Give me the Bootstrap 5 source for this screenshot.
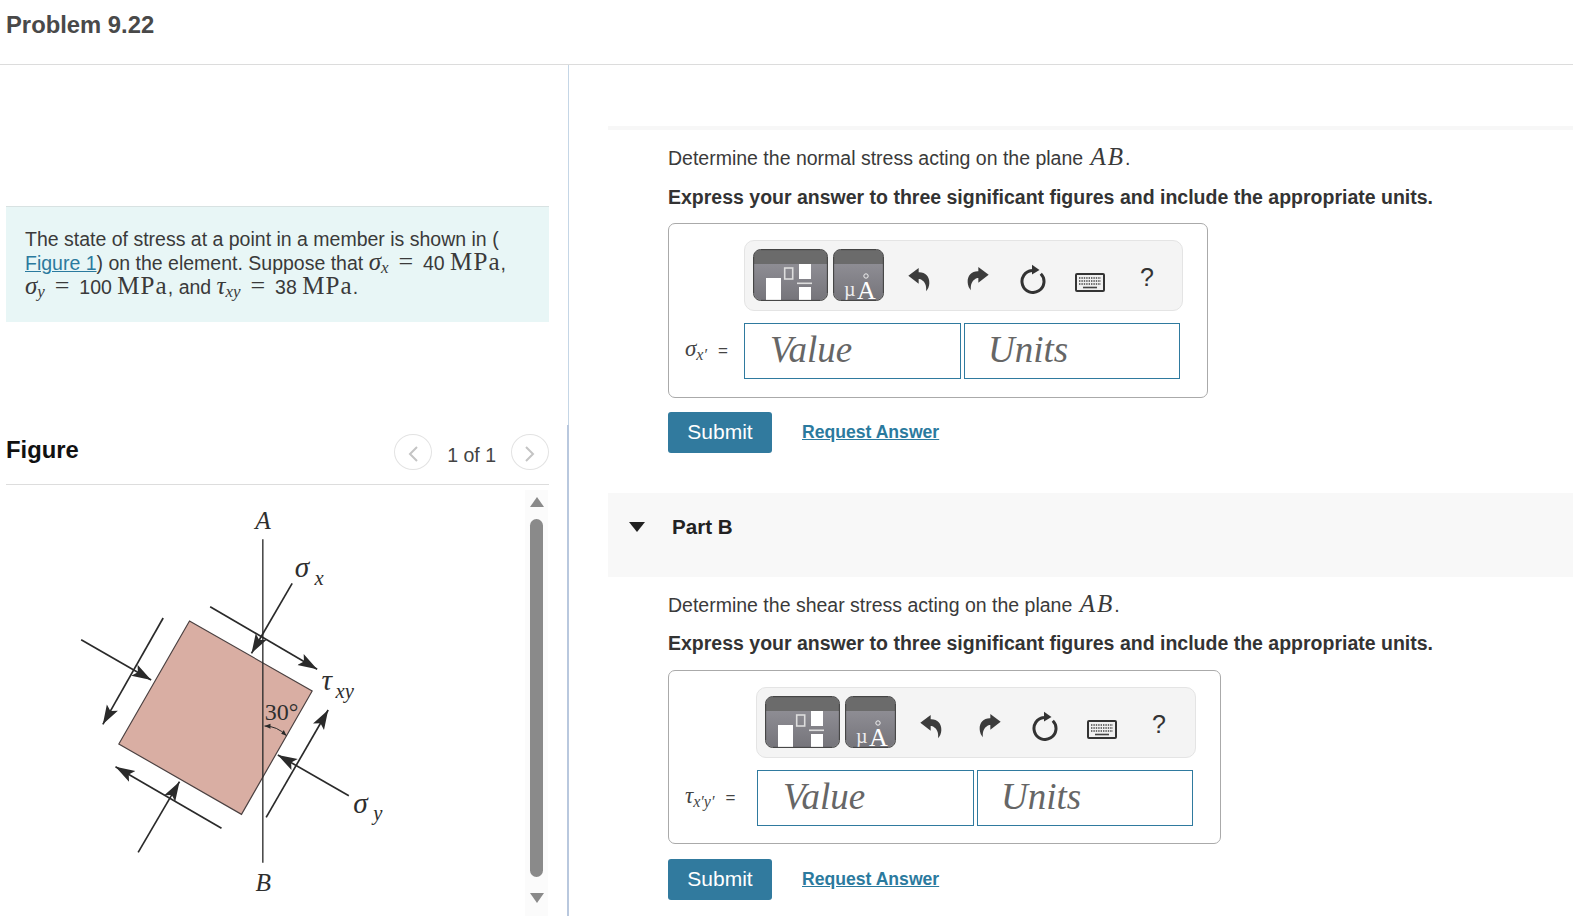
<!DOCTYPE html>
<html lang="en"><head><meta charset="utf-8"><title>Problem 9.22</title>
<link rel="stylesheet" href="https://cdn.jsdelivr.net/npm/bootstrap@5.3.0/dist/css/bootstrap.min.css">
<style>
html,body{height:916px;overflow:hidden;background:#fff}
body{font-family:"Liberation Sans",Arial,sans-serif;font-size:19.5px;line-height:24px;color:#3a3a3a}
.pg-head{height:65px;border-bottom:1px solid #dcdcdc;padding:13px 6px 0}
.pg-title{font-size:23.8px;font-weight:700;line-height:24px;color:#494949;margin:0}
.pg-main{height:851px}
.left-pane{width:569px;flex:none;border-right:1px solid #c5d6e6;padding:141px 19px 0 6px;position:relative}
.left-pane::after{content:"";position:absolute;right:-1px;top:360px;bottom:0;width:2px;background:#b9c8de}
.intro-box{height:116px;background:#e8f6f6;border-top:1px solid #d8e2e2;padding:20px 19px 0;margin-bottom:103px}
.fig-link{color:#2b7a9e;text-decoration:underline}
.fm{font-family:"Liberation Serif",serif;line-height:0}
.fm i{font-size:25px}
.fm sub{font-size:17px;font-style:italic;bottom:-.2em;line-height:0}
.mu{font-size:25px;letter-spacing:1.1px;line-height:0}
.eq{font-size:26px;margin:0 5px;line-height:0}
.fig-head{height:60px;border-bottom:1px solid #ddd}
.fig-title{font-size:23.8px;font-weight:700;color:#111;margin:0;padding-top:11px}
.fig-round{width:38px;height:36px;border:1px solid #e3e3e3;border-radius:50%;background:#fff;padding:0;margin-top:9px}
.fig-count{margin:19px 15px 0;line-height:22px;color:#444}
.fig-body{height:430px}
.fig-svg{width:510px;height:426px;margin-left:54px;margin-top:5px;flex:none}
.fig-svg text{font-family:"Liberation Serif",serif;fill:#2e2e2e}
.sb-track{width:23px;background:#fbfbfb;margin-left:-45px;height:427px;margin-top:5px;padding:7px 5px 0;flex:none}
.sb-up,.sb-down{width:0;height:0;border-left:7px solid transparent;border-right:7px solid transparent;margin-left:-.5px}
.sb-up{border-bottom:10px solid #8a8a8a}
.sb-down{border-top:10px solid #8a8a8a;margin-top:16px}
.sb-thumb{width:13px;height:358px;background:#8a8a8a;border-radius:7px;margin-top:12px}
.right-pane{padding-left:39px;min-width:0}
.part-strip{height:4px;background:#f7f7f7;margin-top:61px}
.part-body{padding-left:60px;white-space:nowrap}
.q-line{margin:16px 0 0;line-height:24px}
.q-line .fm{font-size:25px;letter-spacing:2px;margin-left:2px}
.q-line .fm i{font-size:25px}
.q-bold{font-weight:700;margin:15px 0 14px;line-height:24px;color:#333}
.q-bold-b{margin-top:14px;margin-bottom:15px}
.ans-box{border:1px solid #aaa;border-radius:7px;padding:16px 24px 16px 16px}
.ans-a{width:540px;height:175px}
.ans-b{width:553px;height:174px}
.ans-b+.act-row{margin-top:15px}
.tool-bar{width:441px;height:71px;background:#f4f4f4;border:1px solid #e4e4e4;border-radius:10px;padding:8px 0 0 8px;margin-bottom:12px}
.lbl-a{width:59px}.lbl-b{width:71px}
.lbl-a,.lbl-b{flex:none;font-size:15px;padding-top:14px;color:#444;white-space:nowrap}
.lbl-a i,.lbl-b i{font-family:"Liberation Serif",serif;font-size:23px}
.lbl-a sub,.lbl-b sub{font-family:"Liberation Serif",serif;font-style:italic;font-size:16px;line-height:0}
.eq-mark{margin-left:11px;font-size:17px}
.lbl-b.lbl-row{width:72px}
.ans-in{width:217px;height:56px;border:1px solid #2f7a9f;border-radius:0;padding:4px 25px;font:italic 37px/44px "Liberation Serif",serif;color:#666;background:#fff}
.ans-in+.ans-in{margin-left:3px;width:216px;padding-left:23px}
.act-row{margin-top:14px}
.btn-send{background:#317a9e;color:#fff;border:0;border-radius:3px;width:104px;height:41px;font-size:21px;line-height:24px;padding:0 0 2px}
.req-link{color:#2b7a9e;font-weight:700;font-size:17.6px;text-decoration:underline;margin:0 0 2px 30px}
.part-b-bar{height:84px;background:#f8f8f8;margin-top:40px;padding:22px 0 0 21px}
.tri-down{width:0;height:0;border-left:8.5px solid transparent;border-right:8.5px solid transparent;border-top:10px solid #222;margin-top:7px}
.part-name{font-size:20.6px;font-weight:700;color:#222;margin:0 0 0 27px;line-height:24px}
.ic-undo{width:22px;height:24px;margin:19px 0 0 24px}
.ic-redo{width:22px;height:24px;margin:18px 0 0 37px}
.ic-spin{width:28px;height:30px;margin:15px 0 0 30px}
.ic-keys{width:30px;height:19px;margin:24px 0 0 28px}
.ic-help{font-size:25px;margin:16px 0 0 35px;line-height:24px;color:#333}
.gap-six{margin-left:5px}
</style></head><body>
<header class="pg-head"><h1 class="pg-title">Problem 9.22</h1></header>
<main class="pg-main d-flex">
<section class="left-pane">
<div class="intro-box">The state of stress at a point in a member is shown in (<br><a href="#" class="fig-link">Figure 1</a>) on the element. Suppose that <span class="fm"><i>σ</i><sub>x</sub> <span class="eq">=</span> </span>40 <span class="fm mu">MPa</span>,<br><span class="fm"><i>σ</i><sub>y</sub> <span class="eq">=</span> </span>100 <span class="fm mu">MPa</span>, and <span class="fm"><i>τ</i><sub>xy</sub> <span class="eq">=</span> </span>38 <span class="fm mu">MPa</span>.</div>
<div class="fig-head d-flex justify-content-between">
<h2 class="fig-title">Figure</h2>
<div class="d-flex">
<button class="fig-round" aria-label="Previous"><svg width="14" height="20" viewBox="0 0 14 20"><path d="M11 3 4 10l7 7" fill="none" stroke="#c4c4c4" stroke-width="2"/></svg></button>
<span class="fig-count">1 of 1</span>
<button class="fig-round" aria-label="Next"><svg width="14" height="20" viewBox="0 0 14 20"><path d="M3 3l7 7-7 7" fill="none" stroke="#c4c4c4" stroke-width="2"/></svg></button>
</div></div>
<div class="fig-body d-flex">
<svg class="fig-svg" viewBox="0 0 1527 1278">
<defs><marker id="ah" markerUnits="userSpaceOnUse" markerWidth="60" markerHeight="44" refX="58" refY="22" orient="auto"><path d="M0 3 58 22 0 41 12 22Z" fill="#2a2a2a"/></marker></defs>
<polygon points="387,393 755,603 543,973 175,762" fill="#d9aea3" stroke="#4a4040" stroke-width="3.5"/>
<g stroke="#2a2a2a" stroke-width="5" fill="none">
<path d="M607 148V1118" stroke-width="4"/>
<path d="M695 280 573 490" marker-end="url(#ah)"/>
<path d="M449 350 770 538" marker-end="url(#ah)"/>
<path d="M62 449 272 570" marker-end="url(#ah)"/>
<path d="M308 384 127 703" marker-end="url(#ah)"/>
<path d="M483 1015 165 830" marker-end="url(#ah)"/>
<path d="M233 1087 357 875" marker-end="url(#ah)"/>
<path d="M617 982 803 660" marker-end="url(#ah)"/>
<path d="M865 917 652 795" marker-end="url(#ah)"/>
<path d="M612 708Q650 708 678 737" stroke-width="3"/>
</g>
<path d="M612 708 630 701 630 716ZM678 737 662 731 670 720Z" fill="#2a2a2a"/>
<text x="613" y="690" font-size="72">30°</text>
<text x="584" y="117" font-size="76" font-style="italic">A</text>
<text x="585" y="1202" font-size="76" font-style="italic">B</text>
<text x="703" y="262" font-size="88" font-style="italic">σ</text><text x="762" y="284" font-size="62" font-style="italic">x</text>
<text x="783" y="600" font-size="88" font-style="italic">τ</text><text x="825" y="625" font-size="62" font-style="italic">xy</text>
<text x="878" y="970" font-size="88" font-style="italic">σ</text><text x="938" y="990" font-size="62" font-style="italic">y</text>
</svg>
<div class="sb-track"><div class="sb-up"></div><div class="sb-thumb"></div><div class="sb-down"></div></div>
</div>
</section>
<section class="right-pane flex-grow-1">
<div class="part-strip"></div>
<div class="part-body">
<p class="q-line">Determine the normal stress acting on the plane <span class="fm"><i>AB</i></span>.</p>
<p class="q-bold">Express your answer to three significant figures and include the appropriate units.</p>
<div class="ans-box ans-a">
<div class="d-flex"><div class="lbl-a"></div><div class="tool-bar d-flex">
<svg width="75" height="52" viewBox="0 0 75 52"><defs><linearGradient id="g1" x1="0" y1="0" x2="0" y2="1"><stop offset="0" stop-color="#98979e"/><stop offset="1" stop-color="#75747a"/></linearGradient><clipPath id="c1"><rect x="1" y="1" width="73" height="50" rx="7"/></clipPath></defs><g clip-path="url(#c1)"><rect width="75" height="52" fill="url(#g1)"/><rect width="75" height="15" fill="#6b6b6b"/><rect x="13" y="29" width="15" height="23" fill="#fff"/><rect x="31.7" y="19" width="8" height="11" fill="none" stroke="#ddd" stroke-width="1.6"/><rect x="46" y="15" width="12" height="15" fill="#fff"/><rect x="44" y="33.5" width="15" height="1.6" fill="#ddd"/><rect x="46" y="38" width="12" height="14" fill="#fff"/></g><rect x=".6" y=".6" width="73.8" height="50.8" rx="7" fill="none" stroke="#333"/></svg>
<svg class="gap-six overflow-visible" width="51" height="52" viewBox="0 0 51 52"><defs><clipPath id="c2"><rect x="1" y="1" width="49" height="50" rx="7"/></clipPath></defs><g clip-path="url(#c2)"><rect width="51" height="52" fill="url(#g1)"/><rect width="51" height="15" fill="#6b6b6b"/><circle cx="33" cy="27" r="2.2" fill="none" stroke="#eee"/></g><text x="11" y="47" font-family="Liberation Serif,serif" font-size="20" fill="#eee">µ</text><text x="24" y="50" font-family="Liberation Serif,serif" font-size="26" fill="#fff">A</text><rect x=".6" y=".6" width="49.8" height="50.8" rx="7" fill="none" stroke="#333"/></svg>
<svg class="ic-undo" viewBox="0 0 64 72"><path d="M0 23 31 0V13C50 12 64 25 63 46 63 55 58 66 53 70 55 58 52 44 43 38 38 34 34 33 31 33V47Z" fill="#3c3c3c"/></svg>
<svg class="ic-redo" viewBox="0 0 64 72"><path d="M64 23 33 0V13C14 12 0 25 1 46 1 55 6 66 11 70 9 58 12 44 21 38 26 34 30 33 33 33V47Z" fill="#3c3c3c"/></svg>
<svg class="ic-spin" viewBox="0 0 28 30"><path d="M21.8 9.7A11 11 0 1 1 13 6.5" fill="none" stroke="#333" stroke-width="3"/><path d="M13 .8 20.5 6 13 10.5Z" fill="#333"/></svg>
<svg class="ic-keys" viewBox="0 0 30 19"><rect x="1" y="1" width="28" height="17" rx="1" fill="#f0f0f0" stroke="#333" stroke-width="2"/><path d="M4 5H26M4 8H26M4 11H26" stroke="#444" stroke-width="1.6" stroke-dasharray="1.4 1"/><path d="M8 14.5H22" stroke="#444" stroke-width="1.6"/></svg>
<span class="ic-help">?</span>
</div></div>
<div class="d-flex"><div class="lbl-a"><i>σ</i><sub>x′</sub><span class="eq-mark">=</span></div><div class="ans-in">Value</div><div class="ans-in">Units</div></div>
</div>
<div class="act-row d-flex align-items-center"><button class="btn-send">Submit</button><a href="#" class="req-link">Request Answer</a></div>
</div>
<div class="part-b-bar d-flex"><div class="tri-down"></div><h2 class="part-name">Part B</h2></div>
<div class="part-body">
<p class="q-line">Determine the shear stress acting on the plane <span class="fm"><i>AB</i></span>.</p>
<p class="q-bold q-bold-b">Express your answer to three significant figures and include the appropriate units.</p>
<div class="ans-box ans-b">
<div class="d-flex"><div class="lbl-b"></div><div class="tool-bar d-flex">
<svg width="75" height="52" viewBox="0 0 75 52"><defs><clipPath id="c3"><rect x="1" y="1" width="73" height="50" rx="7"/></clipPath></defs><g clip-path="url(#c3)"><rect width="75" height="52" fill="url(#g1)"/><rect width="75" height="15" fill="#6b6b6b"/><rect x="13" y="29" width="15" height="23" fill="#fff"/><rect x="31.7" y="19" width="8" height="11" fill="none" stroke="#ddd" stroke-width="1.6"/><rect x="46" y="15" width="12" height="15" fill="#fff"/><rect x="44" y="33.5" width="15" height="1.6" fill="#ddd"/><rect x="46" y="38" width="12" height="14" fill="#fff"/></g><rect x=".6" y=".6" width="73.8" height="50.8" rx="7" fill="none" stroke="#333"/></svg>
<svg class="gap-six overflow-visible" width="51" height="52" viewBox="0 0 51 52"><g clip-path="url(#c2)"><rect width="51" height="52" fill="url(#g1)"/><rect width="51" height="15" fill="#6b6b6b"/><circle cx="33" cy="27" r="2.2" fill="none" stroke="#eee"/></g><text x="11" y="47" font-family="Liberation Serif,serif" font-size="20" fill="#eee">µ</text><text x="24" y="50" font-family="Liberation Serif,serif" font-size="26" fill="#fff">A</text><rect x=".6" y=".6" width="49.8" height="50.8" rx="7" fill="none" stroke="#333"/></svg>
<svg class="ic-undo" viewBox="0 0 64 72"><path d="M0 23 31 0V13C50 12 64 25 63 46 63 55 58 66 53 70 55 58 52 44 43 38 38 34 34 33 31 33V47Z" fill="#3c3c3c"/></svg>
<svg class="ic-redo" viewBox="0 0 64 72"><path d="M64 23 33 0V13C14 12 0 25 1 46 1 55 6 66 11 70 9 58 12 44 21 38 26 34 30 33 33 33V47Z" fill="#3c3c3c"/></svg>
<svg class="ic-spin" viewBox="0 0 28 30"><path d="M21.8 9.7A11 11 0 1 1 13 6.5" fill="none" stroke="#333" stroke-width="3"/><path d="M13 .8 20.5 6 13 10.5Z" fill="#333"/></svg>
<svg class="ic-keys" viewBox="0 0 30 19"><rect x="1" y="1" width="28" height="17" rx="1" fill="#f0f0f0" stroke="#333" stroke-width="2"/><path d="M4 5H26M4 8H26M4 11H26" stroke="#444" stroke-width="1.6" stroke-dasharray="1.4 1"/><path d="M8 14.5H22" stroke="#444" stroke-width="1.6"/></svg>
<span class="ic-help">?</span>
</div></div>
<div class="d-flex"><div class="lbl-b lbl-row"><i>τ</i><sub>x′y′</sub><span class="eq-mark">=</span></div><div class="ans-in">Value</div><div class="ans-in">Units</div></div>
</div>
<div class="act-row d-flex align-items-center"><button class="btn-send">Submit</button><a href="#" class="req-link">Request Answer</a></div>
</div>
</section>
</main>
<script src="https://cdn.jsdelivr.net/npm/bootstrap@5.3.0/dist/js/bootstrap.bundle.min.js"></script>
</body></html>
